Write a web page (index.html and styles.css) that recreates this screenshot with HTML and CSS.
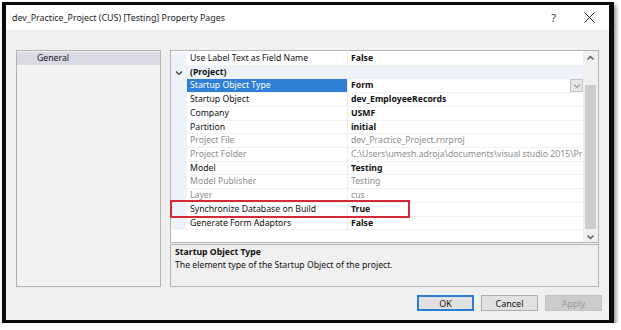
FILE: index.html
```html
<!DOCTYPE html>
<html lang="en">
<head>
    <meta charset="UTF-8">
    <title>dev_Practice_Project (CUS) [Testing] Property Pages</title>
    <link rel="stylesheet" href="styles.css">
</head>
<body>
    <div class="window">
        <!-- Title bar -->
        <div class="titlebar">
            <span class="title">dev_Practice_Project (CUS) [Testing] Property Pages</span>
            <span class="help">?</span>
            <span class="close">
                <svg width="11" height="11" viewBox="0 0 11 11"><path d="M0.5 0.5 L10.5 10.5 M10.5 0.5 L0.5 10.5" stroke="#222" stroke-width="1"/></svg>
            </span>
        </div>

        <div class="dialog">
            <div class="main">
                <!-- Page list -->
                <div class="pages">
                    <div class="page selected">General</div>
                </div>

                <div class="right">
                    <!-- Property grid -->
                    <div class="grid">
                        <div class="rows">
                            <div class="row">
                                <div class="gutter"></div>
                                <div class="name">Use Label Text as Field Name</div>
                                <div class="value bold">False</div>
                            </div>
                            <div class="row category">
                                <div class="gutter">
                                    <svg width="8" height="6" viewBox="0 0 8 6"><path d="M1 1.5 L4 4.5 L7 1.5" fill="none" stroke="#333" stroke-width="1.2"/></svg>
                                </div>
                                <div class="name bold">(Project)</div>
                                <div class="value"></div>
                            </div>
                            <div class="row">
                                <div class="gutter"></div>
                                <div class="name active">Startup Object Type</div>
                                <div class="value bold">Form
                                    <span class="dropbtn">
                                        <svg width="8" height="6" viewBox="0 0 8 6"><path d="M1 1.5 L4 4.5 L7 1.5" fill="none" stroke="#666" stroke-width="1"/></svg>
                                    </span>
                                </div>
                            </div>
                            <div class="row">
                                <div class="gutter"></div>
                                <div class="name">Startup Object</div>
                                <div class="value bold">dev_EmployeeRecords</div>
                            </div>
                            <div class="row">
                                <div class="gutter"></div>
                                <div class="name">Company</div>
                                <div class="value bold">USMF</div>
                            </div>
                            <div class="row">
                                <div class="gutter"></div>
                                <div class="name">Partition</div>
                                <div class="value bold">initial</div>
                            </div>
                            <div class="row readonly">
                                <div class="gutter"></div>
                                <div class="name">Project File</div>
                                <div class="value">dev_Practice_Project.rnrproj</div>
                            </div>
                            <div class="row readonly">
                                <div class="gutter"></div>
                                <div class="name">Project Folder</div>
                                <div class="value">C:\Users\umesh.adroja\documents\visual studio 2015\Pr</div>
                            </div>
                            <div class="row">
                                <div class="gutter"></div>
                                <div class="name">Model</div>
                                <div class="value bold">Testing</div>
                            </div>
                            <div class="row readonly">
                                <div class="gutter"></div>
                                <div class="name">Model Publisher</div>
                                <div class="value">Testing</div>
                            </div>
                            <div class="row readonly">
                                <div class="gutter"></div>
                                <div class="name">Layer</div>
                                <div class="value">cus</div>
                            </div>
                            <div class="row marked">
                                <div class="gutter"></div>
                                <div class="name">Synchronize Database on Build</div>
                                <div class="value bold">True</div>
                            </div>
                            <div class="row">
                                <div class="gutter"></div>
                                <div class="name">Generate Form Adaptors</div>
                                <div class="value bold">False</div>
                            </div>
                        </div>

                        <!-- Scrollbar -->
                        <div class="scrollbar">
                            <svg class="arrow" width="15" height="14" viewBox="0 0 15 14"><path d="M4.5 8.5 L7.5 5.5 L10.5 8.5" fill="none" stroke="#555" stroke-width="1.3"/></svg>
                            <div class="track"><div class="thumb"></div></div>
                            <svg class="arrow" width="15" height="14" viewBox="0 0 15 14"><path d="M4.5 5.5 L7.5 8.5 L10.5 5.5" fill="none" stroke="#555" stroke-width="1.3"/></svg>
                        </div>
                    </div>

                    <!-- Description -->
                    <div class="desc">
                        <div class="desc-title">Startup Object Type</div>
                        <div>The element type of the Startup Object of the project.</div>
                    </div>
                </div>
            </div>

            <div class="buttons">
                <button class="btn default">OK</button>
                <button class="btn">Cancel</button>
                <button class="btn disabled">Apply</button>
            </div>
        </div>
    </div>
</body>
</html>
```

FILE: styles.css
```css
/* Global */
body {
    margin: 0;
    background: #ffffff;
    font-family: "Noto Sans", "Open Sans", sans-serif;
    font-size: 8.7px;
    color: #111;
}

.window {
    margin: 2px 0 0 2px;
    width: 612px;
    height: 321px;
    box-sizing: border-box;
    border: solid #0b0b0b;
    border-width: 3px 5px 3px 4px;
    box-shadow: 2px 3px 4px rgba(0, 0, 0, 0.45);
    display: flex;
    flex-direction: column;
}

/* Title bar */
.titlebar {
    height: 25px;
    background: #ffffff;
    display: flex;
    align-items: center;
    padding-left: 6px;
    flex-shrink: 0;
}

.title {
    flex: 1;
    font-size: 8.9px;
    color: #222;
}

.help {
    font-size: 11px;
    color: #333;
    margin-right: 28px;
}

.close {
    display: flex;
    margin-right: 14px;
}

/* Dialog body */
.dialog {
    flex: 1;
    background: #f0f0f0;
    padding: 20px 10px 0 10px;
}

.main {
    display: flex;
    gap: 9px;
    height: 237px;
}

.pages {
    width: 145px;
    flex-shrink: 0;
    box-sizing: border-box;
    border: 1px solid #b2b2b2;
    background: #f3f3f3;
    padding-top: 1px;
}

.page {
    height: 13px;
    line-height: 13px;
    padding-left: 20px;
}

.page.selected {
    background: #dadae4;
}

.right {
    flex: 1;
    min-width: 0;
    display: flex;
    flex-direction: column;
    gap: 1px;
}

/* Property grid */
.grid {
    height: 193px;
    box-sizing: border-box;
    border: 1px solid #b4b4b4;
    background: #ffffff;
    display: flex;
}

.rows {
    flex: 1;
    min-width: 0;
    padding-top: 1px;
}

.row {
    display: flex;
    height: 13.73px;
    line-height: 13px;
}

.gutter {
    width: 16px;
    flex-shrink: 0;
    background: #eef2f9;
    display: flex;
    align-items: center;
    justify-content: center;
}

.name {
    width: 157px;
    flex-shrink: 0;
    padding-left: 3px;
    border-right: 1px solid #ececec;
    border-bottom: 1px solid #f2f2f2;
    white-space: nowrap;
    overflow: hidden;
}

.value {
    flex: 1;
    min-width: 0;
    padding-left: 3px;
    border-bottom: 1px solid #f2f2f2;
    white-space: nowrap;
    overflow: hidden;
    position: relative;
}

.bold {
    font-weight: bold;
}

.category .name,
.category .value {
    background: #eef2f9;
    border-color: #eef2f9;
}

.name.active {
    background: #2e7fd6;
    color: #ffffff;
}

.readonly .name,
.readonly .value {
    color: #8e8e8e;
}

.dropbtn {
    position: absolute;
    right: 0;
    top: 0;
    width: 11px;
    height: 11px;
    border: 1px solid #c3c3c3;
    background: #e6e6e6;
    display: flex;
    align-items: center;
    justify-content: center;
}

/* Highlight box over the sync row */
.marked {
    position: relative;
}

.marked::after {
    content: "";
    position: absolute;
    left: -1px;
    top: -3px;
    width: 236px;
    height: 14px;
    border: 2px solid #d22a36;
}

/* Scrollbar */
.scrollbar {
    width: 15px;
    flex-shrink: 0;
    background: #f0f0f0;
    display: flex;
    flex-direction: column;
}

.arrow {
    display: block;
    flex-shrink: 0;
}

.track {
    flex: 1;
    padding: 20px 2px 1px 2px;
}

.thumb {
    height: 144px;
    background: #cdcdcd;
}

/* Description */
.desc {
    flex: 1;
    box-sizing: border-box;
    border: 1px solid #b4b4b4;
    padding: 1px 4px;
    line-height: 13px;
}

.desc-title {
    font-weight: bold;
}

/* Buttons */
.buttons {
    display: flex;
    justify-content: flex-end;
    gap: 7px;
    margin-top: 8px;
    margin-right: -3px;
}

.btn {
    width: 57px;
    height: 16px;
    padding: 0;
    font-family: inherit;
    font-size: 9px;
    background: #e1e1e1;
    border: 1px solid #adadad;
    color: #111;
}

.btn.default {
    border: 2px solid #2a7fd4;
}

.btn.disabled {
    background: #cccccc;
    border-color: #c4c4c4;
    color: #9a9a9a;
}
```
